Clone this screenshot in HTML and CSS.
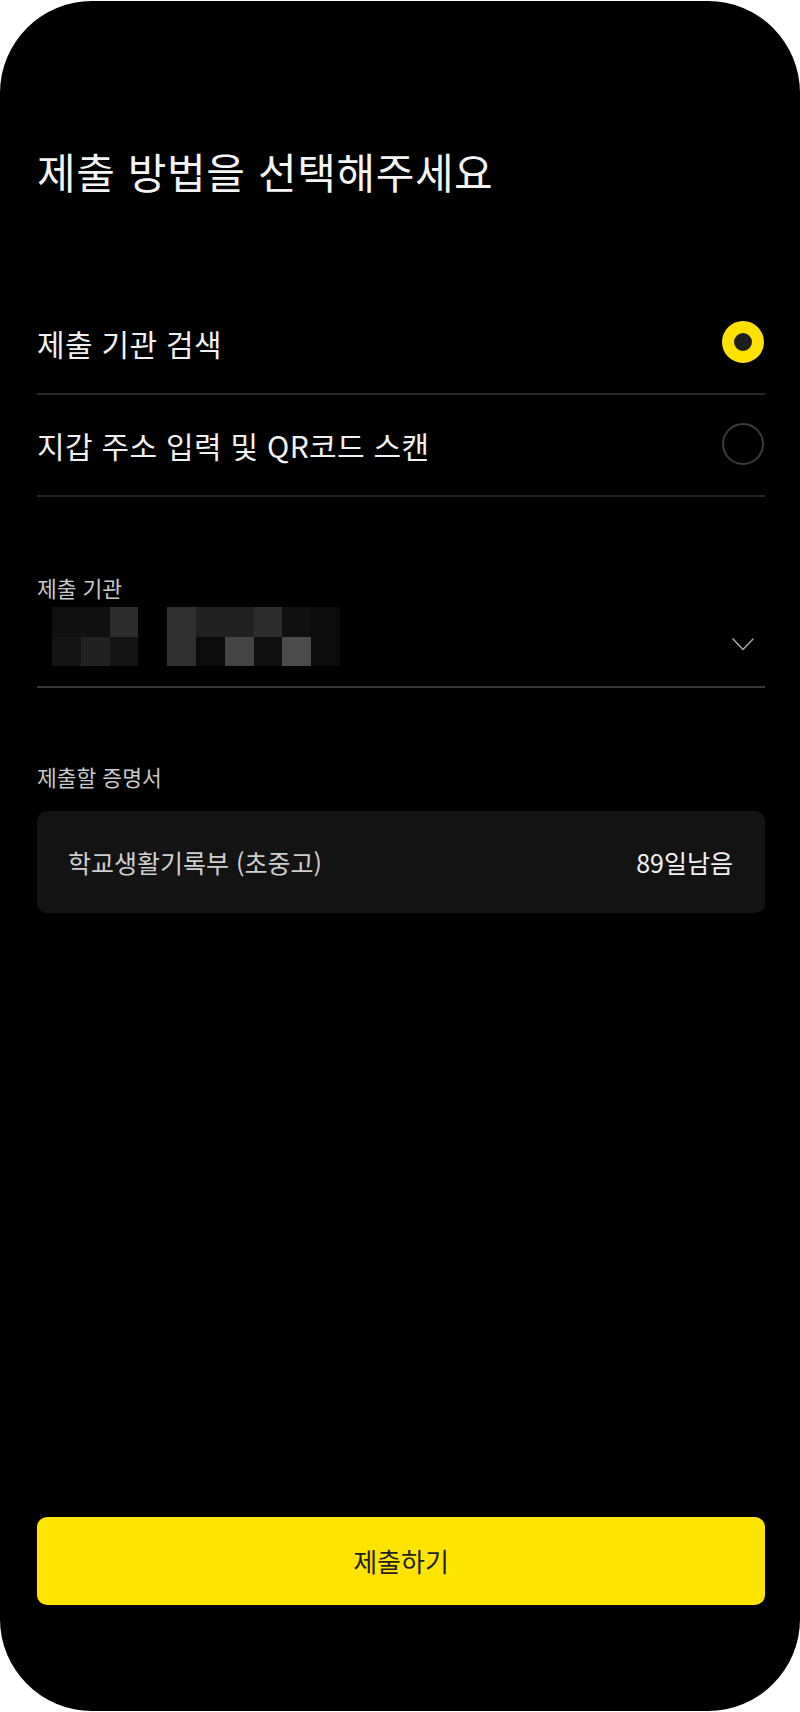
FILE: index.html
```html
<!DOCTYPE html>
<html lang="ko">
<head>
<meta charset="utf-8">
<title>제출 방법 선택</title>
<link rel="stylesheet" href="styles.css">
</head>
<body>
<main class="screen">
  <h1 class="title">제출 방법을 선택해주세요</h1>

  <ul class="options">
    <li class="option">
      <span class="option-text">제출 기관 검색</span>
      <span class="radio radio-on"></span>
    </li>
    <li class="option">
      <span class="option-text">지갑 주소 입력 및 QR코드 스캔</span>
      <span class="radio"></span>
    </li>
  </ul>

  <section class="field">
    <div class="label">제출 기관</div>
    <div class="field-row">
      <div class="mosaic">
        <span class="s2"></span><span class="s2"></span><span class="s5"></span><span class="s0"></span><span class="s6"></span><span class="s4"></span><span class="s4"></span><span class="s5"></span><span class="s2"></span><span class="s1"></span>
        <span class="s3"></span><span class="s4"></span><span class="s3"></span><span class="s0"></span><span class="s6"></span><span class="s1"></span><span class="s7"></span><span class="s2"></span><span class="s8"></span><span class="s1"></span>
      </div>
      <svg class="chevron" width="22" height="13" viewBox="0 0 22 13" aria-hidden="true">
        <polyline points="1,1 11,11.5 21,1" fill="none" stroke="#a8a8a8" stroke-width="1.5" stroke-linecap="round" stroke-linejoin="round"/>
      </svg>
    </div>
  </section>

  <section class="cert">
    <div class="label">제출할 증명서</div>
    <div class="card">
      <span class="card-name">학교생활기록부 (초중고)</span>
      <span class="card-days">89일남음</span>
    </div>
  </section>

  <button class="submit" type="button">제출하기</button>
</main>
</body>
</html>
```

FILE: styles.css
```css
html, body {
  margin: 0;
  padding: 0;
  background: #ffffff;
}

body {
  font-family: "Noto Sans CJK KR", "Noto Sans", sans-serif;
  color: #f2f2f2;
}

.screen {
  box-sizing: border-box;
  width: 800px;
  height: 1710px;
  margin-top: 1px;
  background: #000000;
  border-radius: 92px;
  padding: 145px 35px 106px 37px;
  display: flex;
  flex-direction: column;
}

.title {
  margin: 0;
  font-size: 42px;
  line-height: 50px;
  font-weight: 400;
  color: #f4f4f4;
  letter-spacing: 0.6px;
}

.options {
  list-style: none;
  margin: 97px 0 0 0;
  padding: 0;
}

.option {
  height: 100px;
  border-bottom: 2px solid #262626;
  display: flex;
  align-items: center;
  justify-content: space-between;
}

.option-text {
  font-size: 30px;
  line-height: 38px;
  color: #f0f0f0;
  letter-spacing: 0.3px;
}

.radio {
  box-sizing: border-box;
  width: 42px;
  height: 42px;
  border-radius: 50%;
  border: 2.5px solid #3c3c3c;
  margin-right: 1px;
  margin-top: -2px;
}

.radio-on {
  border: 12.5px solid #ffe100;
  background: #1e1e1e;
}

.field {
  margin-top: 76px;
  border-bottom: 2px solid #383838;
  padding-bottom: 20px;
}

.label {
  font-size: 21.5px;
  line-height: 29px;
  color: #c9c9c9;
}

.field-row {
  margin-top: 5px;
  display: flex;
  align-items: center;
  justify-content: space-between;
  padding-left: 15px;
}

.mosaic {
  display: grid;
  grid-template-columns: repeat(10, 28.8px);
  grid-template-rows: 29.5px 29.5px;
  filter: blur(0.4px);
}

.s0 { background: #000000; }
.s1 { background: #0b0b0b; }
.s2 { background: #101010; }
.s3 { background: #141414; }
.s4 { background: #212121; }
.s5 { background: #2c2c2c; }
.s6 { background: #303030; }
.s7 { background: #444444; }
.s8 { background: #4b4b4b; }

.chevron {
  margin-top: 15px;
  margin-right: 11px;
}

.cert {
  margin-top: 74px;
}

.card {
  margin-top: 20px;
  height: 102px;
  box-sizing: border-box;
  background: #131313;
  border-radius: 10px;
  padding: 0 32px 0 31px;
  display: flex;
  align-items: center;
  justify-content: space-between;
}

.card-name {
  font-size: 25px;
  line-height: 32px;
  color: #cfcfcf;
}

.card-days {
  font-size: 25px;
  line-height: 32px;
  color: #f2f2f2;
}

.submit {
  margin-top: auto;
  height: 88px;
  width: 100%;
  border: none;
  border-radius: 10px;
  background: #ffe400;
  color: #1f1f1f;
  font-family: "Noto Sans CJK KR", "Noto Sans", sans-serif;
  font-size: 26px;
  line-height: 34px;
  padding: 0;
}
```
